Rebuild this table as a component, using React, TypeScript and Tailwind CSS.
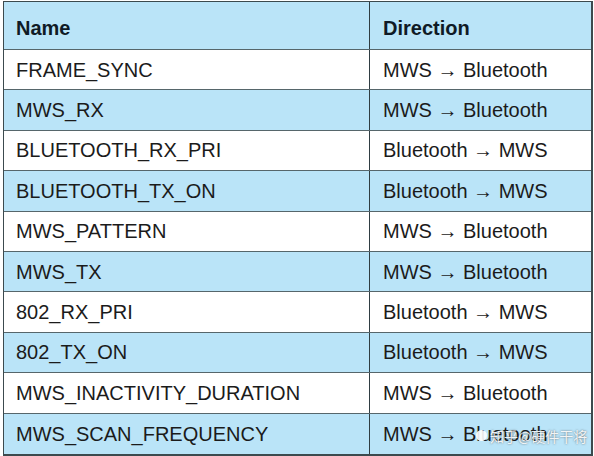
import React from 'react';

const rows: { name: string; dir: string }[] = [
  { name: 'FRAME_SYNC', dir: 'MWS → Bluetooth' },
  { name: 'MWS_RX', dir: 'MWS → Bluetooth' },
  { name: 'BLUETOOTH_RX_PRI', dir: 'Bluetooth → MWS' },
  { name: 'BLUETOOTH_TX_ON', dir: 'Bluetooth → MWS' },
  { name: 'MWS_PATTERN', dir: 'MWS → Bluetooth' },
  { name: 'MWS_TX', dir: 'MWS → Bluetooth' },
  { name: '802_RX_PRI', dir: 'Bluetooth → MWS' },
  { name: '802_TX_ON', dir: 'Bluetooth → MWS' },
  { name: 'MWS_INACTIVITY_DURATION', dir: 'MWS → Bluetooth' },
  { name: 'MWS_SCAN_FREQUENCY', dir: 'MWS → Bluetooth' },
];

export default function App() {
  return (
    <div className="w-[594px] h-[456px] bg-white overflow-hidden pt-[1px] pl-[3px] font-['Liberation_Sans',Arial,sans-serif] text-[20px] text-[#1b1b1b]">
      <div className="relative w-[590px] border-l-[1.5px] border-t-[1.5px] border-r-2 border-b-2 border-[#3c4a4e]">
        {/* Header */}
        <div className="flex h-[48px] bg-[#bae4f8] border-b border-[#56666b]">
          <div className="w-[366px] flex items-center pl-[12px] pt-[4px] font-bold text-[#0f1a26] border-r border-[#2f3d42]">
            Name
          </div>
          <div className="flex-1 flex items-center pl-[13px] pt-[4px] font-bold text-[#0f1a26]">Direction</div>
        </div>

        {rows.map((r, i) => (
          <div
            key={r.name}
            className={`flex h-[40.4px] ${i % 2 === 1 ? 'bg-[#bae4f8]' : 'bg-white'} ${
              i < rows.length - 1 ? 'border-b border-[#56666b]' : ''
            }`}
          >
            <div className="w-[366px] flex items-center pl-[12px] border-r border-[#2f3d42] whitespace-nowrap">
              {r.name}
            </div>
            <div className="flex-1 flex items-center pl-[13px] whitespace-nowrap">{r.dir}</div>
          </div>
        ))}

        {/* watermark */}
        <div className="absolute left-[472px] bottom-[11px] flex items-center gap-[2px] whitespace-nowrap leading-none text-[14px] text-white/90 font-['Noto_Sans_CJK_SC',sans-serif] [text-shadow:0_0_2px_rgba(60,60,60,0.8)]">
          <span className="w-[11px] h-[11px] rounded-full bg-white/90 mr-[1px]" />
          <span>知乎@硬件干将</span>
        </div>
      </div>
    </div>
  );
}
